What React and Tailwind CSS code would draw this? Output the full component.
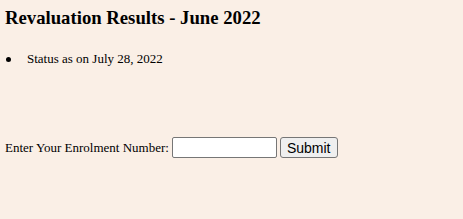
export default function App() {
  return (
    <div className="min-h-[219px] w-full bg-[#faefe6] text-black px-[5px] pt-[6px] font-['Liberation_Serif',serif]">
      <h2 className="text-[18.72px] font-bold leading-[24px]">Revaluation Results - June 2022</h2>
      <ul className="mt-[21px] text-[13px] leading-[16px]">
        <li className="flex items-center">
          <span className="ml-[1px] w-[5px] h-[5px] rounded-full bg-black" />
          <span className="ml-[16px]">Status as on July 28, 2022</span>
        </li>
      </ul>
      <div className="mt-[70px] flex items-center text-[13px]">
        <span>Enter Your Enrolment Number:</span>
        <input
          type="text"
          className="ml-[3px] w-[105px] h-[21px] bg-white border border-[#767676] rounded-[2px] px-1"
        />
        <button className="ml-[3px] h-[21px] px-[6px] bg-[#efefef] border border-[#767676] rounded-[3px] font-['Liberation_Sans',sans-serif] text-[14px] leading-none">
          Submit
        </button>
      </div>
    </div>
  );
}
